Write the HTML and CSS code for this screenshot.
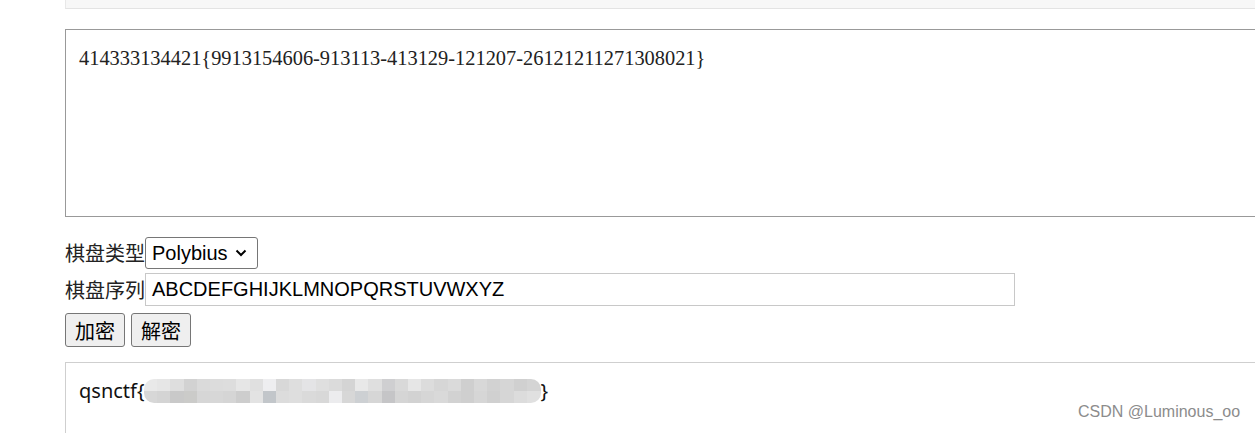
FILE: index.html
```html
<!DOCTYPE html>
<html lang="zh-CN">
<head>
<meta charset="utf-8">
<title>Polybius</title>
<link rel="stylesheet" href="styles.css">
</head>
<body>
<div class="page">
  <div class="topbox"></div>
  <textarea class="cipher" spellcheck="false">414333134421{9913154606-913113-413129-121207-26121211271308021}</textarea>
  <div class="row row-type">
    <label class="label">棋盘类型</label>
    <div class="select">
      <span class="select-text">Polybius</span>
      <svg class="chev" width="12" height="8" viewBox="0 0 12 8"><path d="M1.5 1.5 L6 6 L10.5 1.5" fill="none" stroke="#000" stroke-width="2"/></svg>
    </div>
  </div>
  <div class="row row-seq">
    <label class="label">棋盘序列</label>
    <div class="input">ABCDEFGHIJKLMNOPQRSTUVWXYZ</div>
  </div>
  <div class="buttons">
    <button class="btn">加密</button>
    <button class="btn">解密</button>
  </div>
  <div class="output"><span class="out-text">qsnctf{</span><span class="mosaic"><span class="mrow mtop"></span><span class="mrow mbot"></span></span><span class="out-text">}</span></div>
</div>
<div class="watermark">CSDN @Luminous_oo</div>
</body>
</html>
```
FILE: styles.css
```css
html, body {
  margin: 0;
  padding: 0;
  background: #fff;
  overflow: hidden;
  height: 433px;
}
.page {
  padding-left: 65px;
  display: flex;
  flex-direction: column;
  align-items: flex-start;
}
.topbox {
  width: 1300px;
  height: 9px;
  background: #f7f7f7;
  border-left: 1px solid #e8e8e8;
  border-bottom: 1px solid #e3e3e3;
  box-sizing: border-box;
}
.cipher {
  margin: 20px 0 0 0;
  width: 1300px;
  height: 188px;
  box-sizing: border-box;
  border: 1px solid #999;
  padding: 14px 13px 12px;
  font-family: "Liberation Serif", serif;
  font-size: 20.4px;
  line-height: 28px;
  color: #222;
  resize: none;
  outline: none;
  background: #fff;
}
.row {
  display: flex;
  align-items: center;
}
.row-type { margin-top: 20px; height: 32px; }
.row-seq { margin-top: 4px; height: 33px; }
.label {
  font-family: "Noto Sans CJK SC", sans-serif;
  font-size: 20px;
  line-height: 24px;
  color: #222;
  width: 80px;
}
.select {
  box-sizing: border-box;
  width: 113px;
  height: 32px;
  border: 1px solid #767676;
  border-radius: 3px;
  display: flex;
  align-items: center;
  justify-content: space-between;
  padding: 0 10px 0 6px;
  background: #fff;
}
.select-text {
  font-family: "Liberation Sans", Arial, sans-serif;
  font-size: 20px;
  color: #000;
}
.chev { display: block; }
.input {
  box-sizing: border-box;
  width: 870px;
  height: 33px;
  border: 1px solid #c8c8c8;
  padding: 0 6px;
  display: flex;
  align-items: center;
  font-family: "Liberation Sans", Arial, sans-serif;
  font-size: 20px;
  color: #000;
}
.buttons {
  display: flex;
  gap: 6px;
  margin-top: 7px;
}
.btn {
  box-sizing: border-box;
  width: 60px;
  height: 34px;
  border: 1px solid #767676;
  border-radius: 3px;
  background: #efefef;
  font-family: "Noto Sans CJK SC", sans-serif;
  font-size: 20px;
  color: #000;
  padding: 0;
  display: flex;
  align-items: center;
  justify-content: center;
}
.output {
  margin-top: 15px;
  width: 1300px;
  height: 120px;
  box-sizing: border-box;
  border: 1px solid #cfcfcf;
  padding: 14px 13px;
  display: flex;
  align-items: flex-start;
}
.out-text {
  font-family: "Noto Sans", sans-serif;
  font-size: 20px;
  line-height: 28px;
  color: #111;
}
.mosaic {
  display: flex;
  flex-direction: column;
  width: 397px;
  margin-top: 2px;
  border-radius: 10px;
  overflow: hidden;
  margin-left: -1px;
}
.mrow {
  display: block;
  height: 12px;
}
.mtop {
  background: linear-gradient(to right,
    #e9e9e9 0 13.2px, #e6e6e6 13.2px 26.4px, #dedede 26.4px 39.6px, #d2d2d2 39.6px 52.8px,
    #dadada 52.8px 66px, #dcdcdc 66px 79.2px, #dddddd 79.2px 92.4px, #e6e6e6 92.4px 105.6px,
    #e0e0e0 105.6px 118.8px, #eeeef0 118.8px 132px, #d8d8d8 132px 145.2px, #dedede 145.2px 158.4px,
    #e4e4e6 158.4px 171.6px, #dfdfdf 171.6px 184.8px, #dbdbdb 184.8px 198px, #d4d4d4 198px 211.2px,
    #e8e8e8 211.2px 224.4px, #dfdfdf 224.4px 237.6px, #cfcfd1 237.6px 250.8px, #d9d9d9 250.8px 264px,
    #e6e6e6 264px 277.2px, #dcdcdc 277.2px 290.4px, #d6d6d6 290.4px 303.6px, #dadada 303.6px 316.8px,
    #cfcfcf 316.8px 330px, #d8d8d8 330px 343.2px, #d2d2d2 343.2px 356.4px, #d6d6d6 356.4px 369.6px,
    #d0d0d0 369.6px 382.8px, #d4d4d4 382.8px 397px);
}
.mbot {
  background: linear-gradient(to right,
    #d7d7d7 0 13.2px, #d4d4d4 13.2px 26.4px, #c9c9c9 26.4px 39.6px, #cbcbc9 39.6px 52.8px,
    #d6d6d6 52.8px 66px, #d7d7d7 66px 79.2px, #d5d5d5 79.2px 92.4px, #cdcdcd 92.4px 105.6px,
    #e3e3e3 105.6px 118.8px, #c2c6ca 118.8px 132px, #dcdcdc 132px 145.2px, #dedede 145.2px 158.4px,
    #dadada 158.4px 171.6px, #d8d8d8 171.6px 184.8px, #ececee 184.8px 198px, #d7d7d7 198px 211.2px,
    #cdd0d3 211.2px 224.4px, #d6d6d6 224.4px 237.6px, #c5c5c7 237.6px 250.8px, #d5d5d5 250.8px 264px,
    #d2d2d2 264px 277.2px, #d6d6d6 277.2px 290.4px, #d9d9d9 290.4px 303.6px, #d2d2d2 303.6px 316.8px,
    #cfcfcf 316.8px 330px, #d6d6d6 330px 343.2px, #d0d0d0 343.2px 356.4px, #d6d6d6 356.4px 369.6px,
    #dcdcdc 369.6px 382.8px, #e0e0e0 382.8px 397px);
}
.watermark {
  position: absolute;
  left: 1078px;
  top: 403px;
  font-family: "Liberation Sans", Arial, sans-serif;
  font-size: 16px;
  color: #8c8c8c;
  white-space: nowrap;
}
```
